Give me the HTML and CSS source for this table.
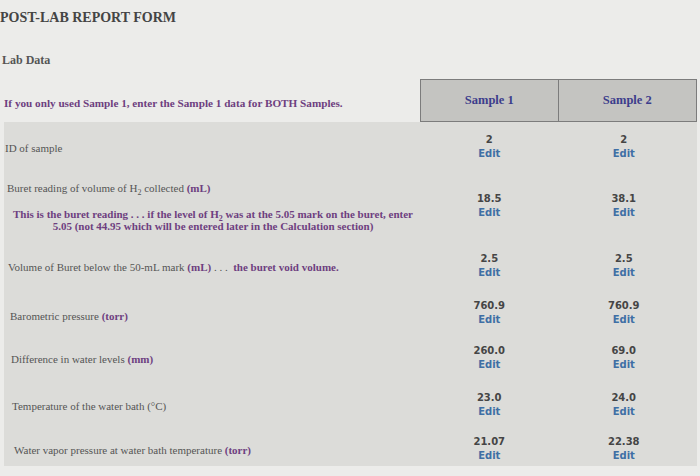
FILE: index.html
```html
<!DOCTYPE html>
<html>
<head>
<meta charset="utf-8">
<link rel="stylesheet" href="styles.css">
</head>
<body>
<h1 class="title">POST-LAB REPORT FORM</h1>
<h2 class="subtitle">Lab Data</h2>
<table class="data">
  <thead>
    <tr>
      <th class="note">If you only used Sample 1, enter the Sample 1 data for BOTH Samples.</th>
      <th class="head">Sample 1</th>
      <th class="head">Sample 2</th>
    </tr>
  </thead>
  <tbody>
    <tr class="r1">
      <td class="label">ID of sample</td>
      <td class="val"><span class="num">2</span><a class="edit">Edit</a></td>
      <td class="val"><span class="num">2</span><a class="edit">Edit</a></td>
    </tr>
    <tr class="r2">
      <td class="label">Buret reading of volume of H<sub>2</sub> collected <b class="unit">(mL)</b>
        <p class="hint">This is the buret reading . . . if the level of H<sub>2</sub> was at the 5.05 mark on the buret, enter 5.05 (not 44.95 which will be entered later in the Calculation section)</p>
      </td>
      <td class="val"><span class="num">18.5</span><a class="edit">Edit</a></td>
      <td class="val"><span class="num">38.1</span><a class="edit">Edit</a></td>
    </tr>
    <tr class="r3">
      <td class="label">Volume of Buret below the 50-mL mark <b class="unit">(mL)</b> . . .&nbsp; <b class="unit">the buret void volume.</b></td>
      <td class="val"><span class="num">2.5</span><a class="edit">Edit</a></td>
      <td class="val"><span class="num">2.5</span><a class="edit">Edit</a></td>
    </tr>
    <tr class="r4">
      <td class="label">Barometric pressure <b class="unit">(torr)</b></td>
      <td class="val"><span class="num">760.9</span><a class="edit">Edit</a></td>
      <td class="val"><span class="num">760.9</span><a class="edit">Edit</a></td>
    </tr>
    <tr class="r5">
      <td class="label">Difference in water levels <b class="unit">(mm)</b></td>
      <td class="val"><span class="num">260.0</span><a class="edit">Edit</a></td>
      <td class="val"><span class="num">69.0</span><a class="edit">Edit</a></td>
    </tr>
    <tr class="r6">
      <td class="label">Temperature of the water bath (°C)</td>
      <td class="val"><span class="num">23.0</span><a class="edit">Edit</a></td>
      <td class="val"><span class="num">24.0</span><a class="edit">Edit</a></td>
    </tr>
    <tr class="r7">
      <td class="label">Water vapor pressure at water bath temperature <b class="unit">(torr)</b></td>
      <td class="val"><span class="num">21.07</span><a class="edit">Edit</a></td>
      <td class="val"><span class="num">22.38</span><a class="edit">Edit</a></td>
    </tr>
  </tbody>
</table>
</body>
</html>
```
FILE: styles.css
```css
html, body {
  margin: 0;
  padding: 0;
  background: #ececea;
  font-family: "Liberation Serif", "Times New Roman", serif;
  color: #555;
}
.title {
  margin: 9px 0 0 0;
  font-size: 14px;
  line-height: 18px;
  font-weight: bold;
  color: #444;
}
.subtitle {
  margin: 25px 0 0 2px;
  font-size: 12px;
  line-height: 16px;
  font-weight: bold;
  color: #555;
}
.data {
  margin: 11px 0 0 4px;
  width: 693px;
  border-collapse: separate;
  border-spacing: 0;
  table-layout: fixed;
}
.data th.note {
  width: 416px;
  text-align: left;
  font-size: 11.2px;
  font-weight: bold;
  color: #6e3f80;
  padding: 5px 0 0 0;
  vertical-align: middle;
}
.data th.head {
  height: 41px;
  padding: 0;
  background: #c4c4c1;
  border: 1px solid #7c7c7c;
  font-size: 12.5px;
  font-weight: bold;
  color: #3c3d8c;
}
.data th.head + th.head {
  border-left: none;
}
.data tbody td {
  box-sizing: border-box;
  background: #dcdcd9;
  padding: 0;
  vertical-align: middle;
}
.data tbody td.val {
  padding-top: 4px;
}
.data tbody td.val + td.val {
  padding-right: 8px;
}
.data tbody td.label {
  padding-top: 6px;
  padding-left: 1px;
}
.r1 td { height: 46px; }
.r2 td { height: 72px; }
.r3 td { height: 48px; }
.r4 td { height: 46px; }
.r5 td { height: 44px; }
.r6 td { height: 49px; }
.r7 td { height: 39px; }
.data .r2 td.label { padding-left: 3px; }
.data .r3 td.label { padding-left: 4px; }
.data .r4 td.label { padding-left: 6px; }
.data .r5 td.label { padding-left: 7px; }
.data .r6 td.label { padding-left: 8px; }
.data .r7 td.label { padding-left: 10px; }
.data .r4 td.label { padding-top: 9px; }
.label {
  font-size: 11px;
  color: #555;
}
.label sub {
  font-size: 8px;
  line-height: 0;
}
.unit {
  color: #6e3f80;
}
.hint {
  margin: 14px 0 0 6px;
  width: 400px;
  text-align: center;
  font-weight: bold;
  color: #6e3f80;
  line-height: 12px;
}
.val {
  text-align: center;
  font-family: "DejaVu Sans", Verdana, sans-serif;
  font-size: 10px;
  font-weight: bold;
  line-height: 14px;
}
.num {
  display: block;
  color: #454545;
}
.edit {
  display: block;
  color: #3f6fa5;
  text-decoration: none;
}
```
